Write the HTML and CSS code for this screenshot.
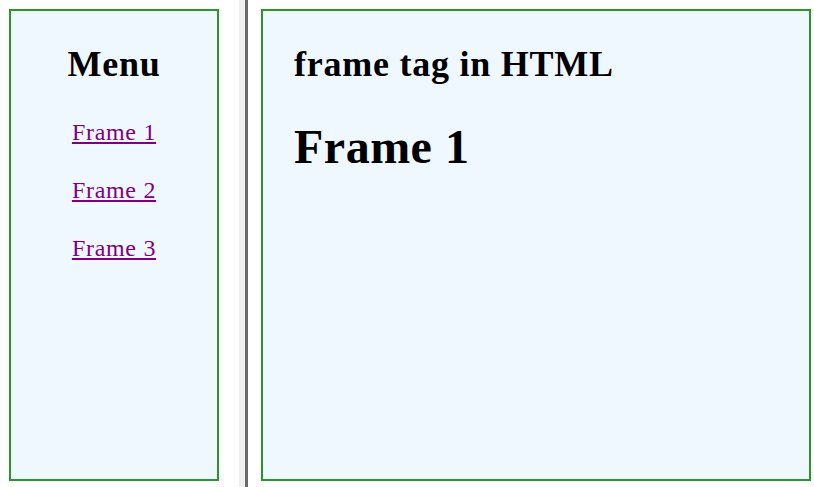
FILE: index.html
```html
<!DOCTYPE html>
<html>
<head>
<meta charset="utf-8">
<link rel="stylesheet" href="styles.css">
</head>
<body>
<div class="frameset">
  <div class="frame frame-left">
    <div class="box box-left">
      <h2 class="title">Menu</h2>
      <nav class="menu">
        <a href="#" class="link">Frame 1</a>
        <a href="#" class="link">Frame 2</a>
        <a href="#" class="link">Frame 3</a>
      </nav>
    </div>
  </div>
  <div class="divider"><div class="divider-line"></div></div>
  <div class="frame frame-right">
    <div class="box box-right">
      <h2 class="title">frame tag in HTML</h2>
      <h1 class="heading">Frame 1</h1>
    </div>
  </div>
</div>
</body>
</html>
```

FILE: styles.css
```css
html, body {
  margin: 0;
  padding: 0;
  background: #ffffff;
}

body {
  width: 814px;
  height: 487px;
  overflow: hidden;
  font-family: "Liberation Serif", "Times New Roman", serif;
  color: #000000;
}

.frameset {
  display: flex;
  height: 487px;
}

.frame {
  display: flex;
  box-sizing: border-box;
  height: 100%;
}

.frame-left {
  width: 239px;
  padding: 9px 20px 6px 9px;
}

.frame-right {
  flex: 1;
  padding: 9px 3px 6px 13px;
}

.divider {
  width: 9px;
  background: #f0f0f0;
  display: flex;
  justify-content: flex-end;
}

.divider-line {
  width: 3px;
  background: #6b6b6b;
}

.box {
  flex: 1;
  box-sizing: border-box;
  border: 2px solid #2a962a;
  background: #f0f8ff;
}

.box-left {
  text-align: center;
}

.box-right {
  padding-left: 31px;
}

.title {
  margin: 32px 0 0 0;
  font-size: 36px;
  line-height: 42px;
  font-weight: bold;
  letter-spacing: 0.75px;
}

.menu {
  display: flex;
  flex-direction: column;
  align-items: center;
  gap: 30px;
  margin-top: 33px;
}

.link {
  font-size: 24px;
  line-height: 28px;
  color: #800080;
  text-decoration: underline;
  letter-spacing: 0.7px;
}

.heading {
  margin: 34px 0 0 0;
  font-size: 48px;
  line-height: 56px;
  font-weight: bold;
  letter-spacing: 0.5px;
}
```
